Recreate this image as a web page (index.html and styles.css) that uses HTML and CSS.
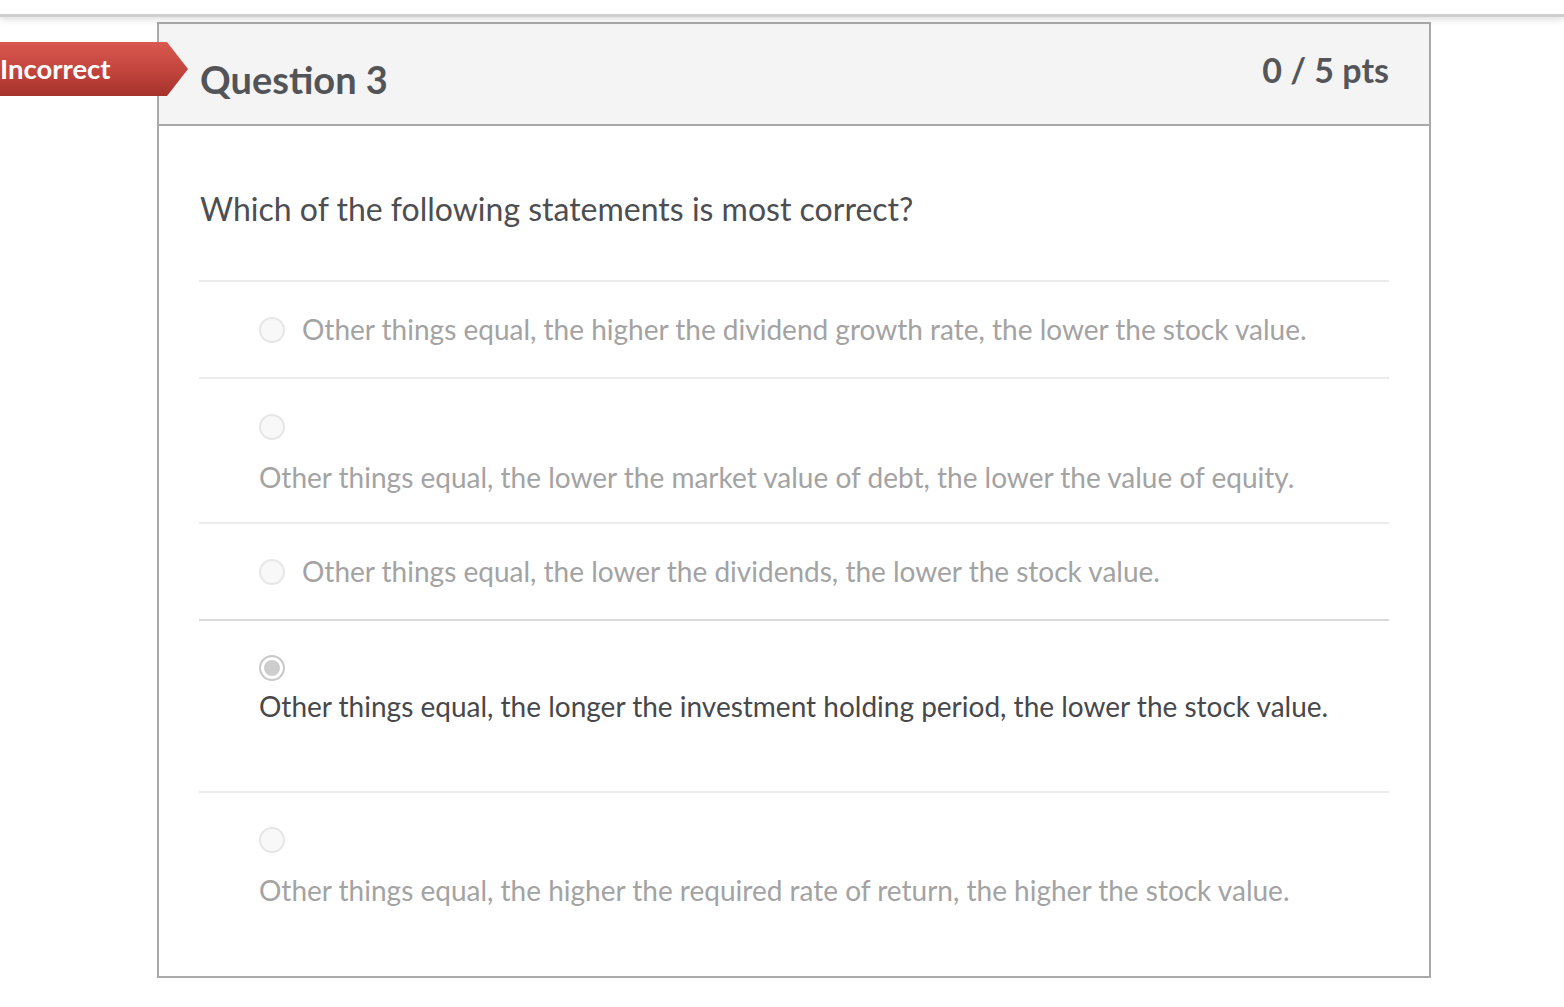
FILE: index.html
```html
<!DOCTYPE html>
<html>
<head>
<meta charset="utf-8">
<link rel="stylesheet" href="styles.css">
</head>
<body>
<div class="topbar"></div>
<div class="page">
  <div class="badge">Incorrect</div>
  <div class="question">
    <div class="q-header">
      <h2 class="q-title">Question 3</h2>
      <div class="q-pts">0 / 5 pts</div>
    </div>
    <div class="q-body">
      <p class="q-text">Which of the following statements is most correct?</p>
      <div class="answers">
        <div class="answer inline">
          <span class="radio"></span>
          <span class="a-text">Other things equal, the higher the dividend growth rate, the lower the stock value.</span>
        </div>
        <div class="answer stacked">
          <div class="radio-line"><span class="radio"></span></div>
          <div class="a-text">Other things equal, the lower the market value of debt, the lower the value of equity.</div>
        </div>
        <div class="answer inline">
          <span class="radio"></span>
          <span class="a-text">Other things equal, the lower the dividends, the lower the stock value.</span>
        </div>
        <div class="answer stacked selected">
          <div class="radio-line"><span class="radio checked"></span></div>
          <div class="a-text">Other things equal, the longer the investment holding period, the lower the stock value.</div>
        </div>
        <div class="answer stacked last">
          <div class="radio-line"><span class="radio"></span></div>
          <div class="a-text">Other things equal, the higher the required rate of return, the higher the stock value.</div>
        </div>
      </div>
    </div>
  </div>
</div>
</body>
</html>
```

FILE: styles.css
```css
html, body {
  margin: 0;
  padding: 0;
  background: #fff;
  font-family: "Lato", "Open Sans", sans-serif;
}

.topbar {
  height: 14px;
  border-bottom: 3px solid #cfcfcf;
  box-shadow: 0 3px 6px rgba(0, 0, 0, 0.12);
  position: relative;
  z-index: 1;
}

.page {
  position: relative;
  padding-top: 5px;
  padding-bottom: 29px;
}

.badge {
  position: absolute;
  left: 0;
  top: 25px;
  width: 188px;
  height: 54px;
  box-sizing: border-box;
  background: linear-gradient(to bottom, #d9584f 0%, #c2443d 55%, #a5322c 100%);
  clip-path: polygon(0 0, 167px 0, 188px 27px, 167px 54px, 0 54px);
  color: #fff;
  font-weight: 700;
  font-size: 27.5px;
  line-height: 54px;
  z-index: 2;
  display: flex;
  align-items: center;
}

.question {
  margin-left: 157px;
  width: 1274px;
  box-sizing: border-box;
  border: 2px solid #a9a9a9;
}

.q-header {
  background: #f4f4f4;
  height: 100px;
  border-bottom: 2px solid #a9a9a9;
  display: flex;
  justify-content: space-between;
  align-items: flex-start;
  padding: 0 40px 0 41px;
}

.q-title {
  margin: 0;
  padding-top: 31px;
  font-size: 38px;
  line-height: 48px;
  font-weight: 700;
  color: #535458;
}

.q-pts {
  padding-top: 26px;
  font-size: 34px;
  line-height: 40px;
  font-weight: 700;
  color: #55565a;
}

.q-body {
  padding: 0 40px;
}

.q-text {
  margin: 0;
  padding-top: 60px;
  padding-left: 1px;
  font-size: 32px;
  line-height: 45px;
  color: #4d4e52;
  padding-bottom: 49px;
}

.answer {
  border-top: 2px solid #ececec;
  padding-left: 60px;
  font-size: 28px;
  line-height: 39px;
  color: #a3a3a3;
}

.answer.inline {
  display: flex;
  align-items: center;
  gap: 17px;
  padding-top: 28px;
  padding-bottom: 28px;
}

.answer.stacked {
  padding-top: 28px;
  padding-bottom: 25px;
}

.answer.stacked .radio-line {
  height: 39px;
  display: flex;
  align-items: center;
  margin-bottom: 12px;
}

.answer.selected {
  border-top-color: #d9d9d9;
  padding-top: 27px;
  padding-bottom: 65px;
  color: #47484c;
}

.answer.selected .radio-line {
  margin-bottom: 0;
}

.answer.last {
  padding-top: 27px;
  padding-bottom: 66px;
}

.radio {
  display: inline-block;
  width: 26px;
  height: 26px;
  box-sizing: border-box;
  border: 2px solid #e6e6e6;
  border-radius: 50%;
  background: #f8f8f8;
  flex: none;
}

.radio.checked {
  border-color: #c9c9c9;
  background: #fff;
  box-shadow: inset 0 0 0 3px #fff, inset 0 0 0 12px #cdcdcd;
}
```
